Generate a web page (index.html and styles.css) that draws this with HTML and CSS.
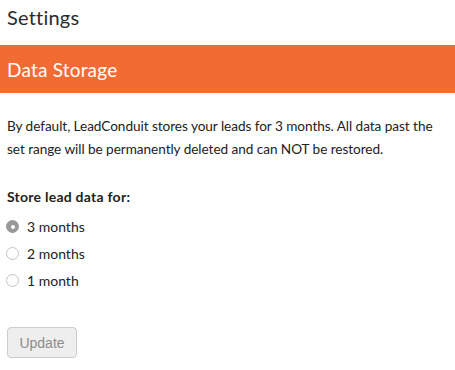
FILE: index.html
```html
<!DOCTYPE html>
<html lang="en">
<head>
  <meta charset="UTF-8" />
  <title>Settings</title>
  <link rel="stylesheet" href="styles.css">
</head>
<body>

<h1 class="page-title">Settings</h1>

<div class="section-bar">
  <h2>Data Storage</h2>
</div>

<div class="section-body">
  <p class="intro">By default, LeadConduit stores your leads for 3 months. All data past the set range will be permanently deleted and can NOT be restored.</p>

  <form class="retention-form">
    <div class="field-label">Store lead data for:</div>

    <label class="radio-row">
      <input type="radio" name="retention" value="3" checked>
      <span>3 months</span>
    </label>
    <label class="radio-row">
      <input type="radio" name="retention" value="2">
      <span>2 months</span>
    </label>
    <label class="radio-row">
      <input type="radio" name="retention" value="1">
      <span>1 month</span>
    </label>

    <button type="button" class="btn-update" disabled>Update</button>
  </form>
</div>

</body>
</html>
```

FILE: styles.css
```css
* {
  margin: 0;
  padding: 0;
  box-sizing: border-box;
}

body {
  font-family: Lato, "Open Sans", sans-serif;
  color: #222;
  background: #fff;
}

.page-title {
  font-weight: 400;
  font-size: 20px;
  line-height: 24px;
  padding: 5px 7px 16px;
  color: #2b2b2b;
  letter-spacing: 0.2px;
}

.section-bar {
  background: #f26b33;
  height: 48px;
  display: flex;
  align-items: center;
  padding: 0 7px;
}

.section-bar h2 {
  font-weight: 400;
  font-size: 19px;
  color: #fff;
  letter-spacing: 0.2px;
}

.section-body {
  padding: 22px 7px 0;
}

.intro {
  font-size: 13.6px;
  line-height: 23px;
  color: #222;
  letter-spacing: -0.05px;
}

.retention-form {
  display: flex;
  flex-direction: column;
  align-items: flex-start;
  margin-top: 27px;
}

.field-label {
  font-size: 14px;
  font-weight: 700;
  margin-bottom: 8px;
  letter-spacing: 0.25px;
}

.radio-row {
  display: flex;
  align-items: center;
  gap: 8px;
  font-size: 14px;
  height: 27px;
}

.radio-row input {
  appearance: none;
  -webkit-appearance: none;
  width: 13px;
  height: 13px;
  margin: 0 0 0 -1px;
  border: 1px solid #c4c4c4;
  border-radius: 50%;
  background: #fff;
  display: flex;
  align-items: center;
  justify-content: center;
}

.radio-row input:checked {
  background: #999;
  border-color: #999;
}

.radio-row input:checked::after {
  content: "";
  width: 4px;
  height: 4px;
  border-radius: 50%;
  background: #fff;
}

.btn-update {
  margin-top: 33px;
  width: 70px;
  height: 31px;
  font-family: "Liberation Sans", Arial, sans-serif;
  font-size: 14px;
  color: #8c8c8c;
  background: #eee;
  border: 1px solid #ccc;
  border-radius: 4px;
}
```
